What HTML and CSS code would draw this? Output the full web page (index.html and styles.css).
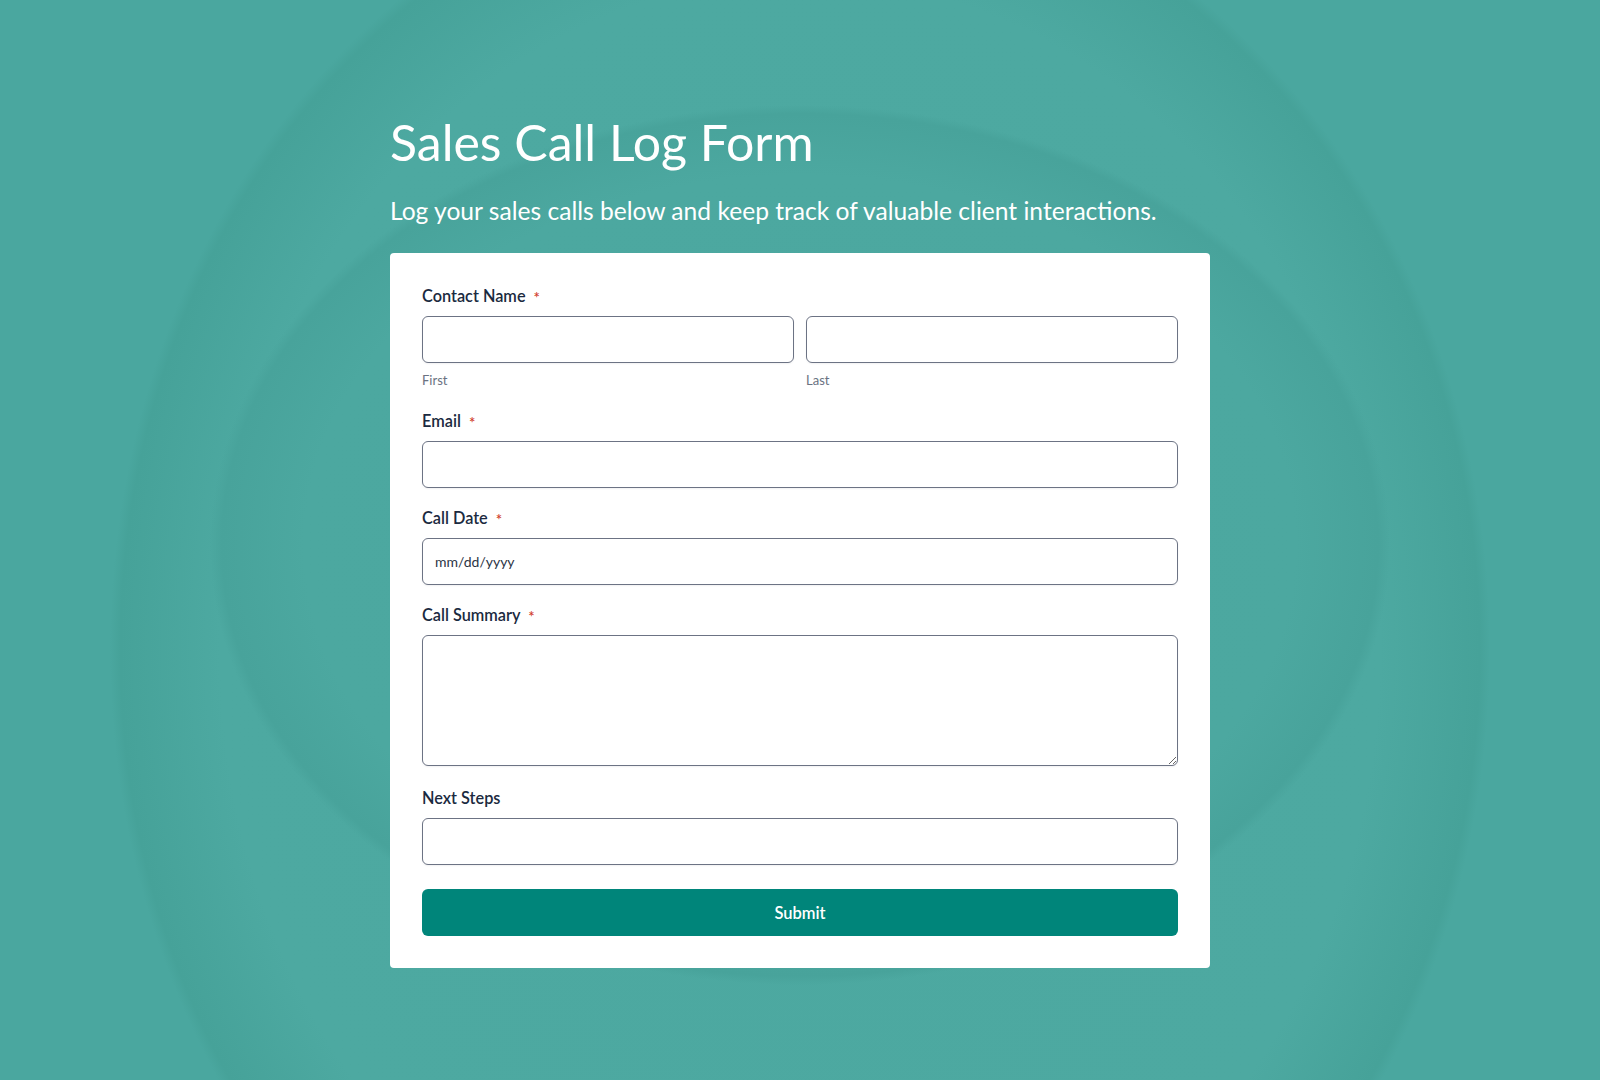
FILE: index.html
```html
<!DOCTYPE html>
<html>

<head>
  <meta charset="utf-8">
  <meta name="viewport" content="width=device-width, initial-scale=1" />
  <title>Sales Call Log Form</title>
  <link rel="stylesheet" href="styles.css">
</head>

<body>

<div class="page">
  <h1 class="form-title">Sales Call Log Form</h1>
  <p class="form-intro">Log your sales calls below and keep track of valuable client interactions.</p>

  <form class="card" onsubmit="return false">
    <div class="field name-field">
      <label class="field-label">Contact Name <span class="req">*</span></label>
      <div class="name-row">
        <div class="name-part">
          <input type="text" class="input" name="first">
          <span class="sublabel">First</span>
        </div>
        <div class="name-part">
          <input type="text" class="input" name="last">
          <span class="sublabel">Last</span>
        </div>
      </div>
    </div>

    <div class="field">
      <label class="field-label">Email <span class="req">*</span></label>
      <input type="email" class="input" name="email">
    </div>

    <div class="field">
      <label class="field-label">Call Date <span class="req">*</span></label>
      <input type="text" class="input date" name="date" placeholder="mm/dd/yyyy">
    </div>

    <div class="field area-field">
      <label class="field-label">Call Summary <span class="req">*</span></label>
      <textarea class="input area" name="summary"></textarea>
    </div>

    <div class="field last-field">
      <label class="field-label">Next Steps</label>
      <input type="text" class="input" name="next">
    </div>

    <button type="submit" class="submit">Submit</button>
  </form>
</div>

</body>
</html>
```

FILE: styles.css
```css
html {
  height: 100%;
}
body {
  margin: 0;
  min-height: 100%;
  font-family: Lato, "Open Sans", sans-serif;
  background-color: #4aa79f;
  /* soft ripple rings behind the form */
  background-image:
    radial-gradient(ellipse 590px 440px at 800px 545px, #4ba79f 0%, #4ca8a0 84%, #48a39b 98%, rgba(74,167,159,0) 100%),
    radial-gradient(ellipse 690px 800px at 800px 650px, #4ca8a0 0%, #4da9a1 84%, #46a299 98.5%, rgba(74,167,159,0) 100%);
  background-repeat: no-repeat;
}

.page {
  width: 820px;
  margin: 0 auto;
  padding: 110px 0 80px;
}

.form-title {
  margin: 0;
  font-weight: 400;
  font-size: 50px;
  line-height: 64px;
  color: #fff;
}

.form-intro {
  margin: 22px 0 27px;
  font-size: 24.6px;
  line-height: 30px;
  font-weight: 400;
  color: #fff;
}

.card {
  display: block;
  background: #fff;
  border-radius: 4px;
  padding: 32px 32px 32px;
}

.field {
  margin-bottom: 19px;
}

.name-field {
  margin-bottom: 22px;
}

.area-field {
  margin-bottom: 21px;
}

.last-field {
  margin-bottom: 24px;
}

.field-label {
  display: block;
  font-size: 16.3px;
  font-weight: 600;
  line-height: 22px;
  color: #1b2a40;
  margin-bottom: 9px;
}

.req {
  color: #d1402c;
  font-size: 15px;
  line-height: 0;
  margin-left: 4px;
  vertical-align: -1px;
}

.name-row {
  display: flex;
  gap: 12px;
}

.name-part {
  flex: 1;
}

.sublabel {
  display: block;
  margin-top: 9px;
  font-size: 13px;
  line-height: 16px;
  color: #6a7282;
}

.input {
  display: block;
  box-sizing: border-box;
  width: 100%;
  height: 47px;
  margin: 0;
  padding: 0 12px;
  border: 1px solid #6c7384;
  border-radius: 6px;
  background: #fff;
  font-family: inherit;
  font-size: 14px;
  color: #1b2a40;
  box-shadow: 0 1px 2px rgba(16, 24, 40, 0.06);
}

.date::placeholder {
  color: #2b3445;
}

.area {
  height: 131px;
  padding: 10px 12px;
  resize: vertical;
}

.submit {
  display: block;
  width: 100%;
  height: 47px;
  margin: 0;
  border: 0;
  border-radius: 6px;
  background: #00857a;
  color: #fff;
  font-family: inherit;
  font-size: 16.5px;
  font-weight: 600;
  cursor: pointer;
}
```
